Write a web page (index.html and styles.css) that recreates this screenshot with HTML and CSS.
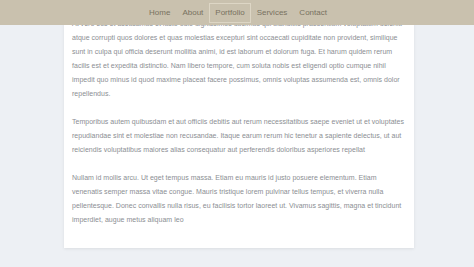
FILE: index.html
```html
<!DOCTYPE html>
<html>
<head>
<meta charset="utf-8">
<link rel="stylesheet" href="styles.css">
</head>
<body>
<nav class="nav">
  <a class="nav-link" href="#">Home</a>
  <a class="nav-link" href="#">About</a>
  <a class="nav-link active" href="#">Portfolio</a>
  <a class="nav-link" href="#">Services</a>
  <a class="nav-link" href="#">Contact</a>
</nav>
<main class="card">
  <p>At vero eos et accusamus et iusto odio dignissimos ducimus qui blanditiis praesentium voluptatum deleniti atque corrupti quos dolores et quas molestias excepturi sint occaecati cupiditate non provident, similique sunt in culpa qui officia deserunt mollitia animi, id est laborum et dolorum fuga. Et harum quidem rerum facilis est et expedita distinctio. Nam libero tempore, cum soluta nobis est eligendi optio cumque nihil impedit quo minus id quod maxime placeat facere possimus, omnis voluptas assumenda est, omnis dolor repellendus.</p>
  <p>Temporibus autem quibusdam et aut officiis debitis aut rerum necessitatibus saepe eveniet ut et voluptates repudiandae sint et molestiae non recusandae. Itaque earum rerum hic tenetur a sapiente delectus, ut aut reiciendis voluptatibus maiores alias consequatur aut perferendis doloribus asperiores repellat</p>
  <p>Nullam id mollis arcu. Ut eget tempus massa. Etiam eu mauris id justo posuere elementum. Etiam venenatis semper massa vitae congue. Mauris tristique lorem pulvinar tellus tempus, et viverra nulla pellentesque. Donec convallis nulla risus, eu facilisis tortor laoreet ut. Vivamus sagittis, magna et tincidunt imperdiet, augue metus aliquam leo</p>
</main>
</body>
</html>
```
FILE: styles.css
```css
html, body {
  margin: 0;
  padding: 0;
}
body {
  background: #edf0f4;
  font-family: "Liberation Sans", Arial, sans-serif;
  height: 267px;
  overflow: hidden;
  padding-left: 4px;
}
.nav {
  position: fixed;
  top: 0;
  left: 0;
  right: 0;
  height: 25px;
  padding-left: 2px;
  background: #c9c1ae;
  display: flex;
  justify-content: center;
  align-items: center;
  gap: 0;
  z-index: 2;
}
.nav-link {
  font-size: 8px;
  color: #78715f;
  text-decoration: none;
  padding: 5px 5px;
  line-height: 8px;
  border: 1px solid transparent;
}
.nav-link.active {
  border-color: #ddd6c5;
}
.card {
  width: 334px;
  margin: 0 auto;
  background: #fff;
  padding: 17px 8px 7px;
  box-shadow: 0 1px 3px rgba(0,0,0,0.08);
}
.card p {
  margin: 0 0 14px;
  font-size: 7px;
  letter-spacing: 0.02px;
  line-height: 14px;
  color: #8b8e93;
}
```
